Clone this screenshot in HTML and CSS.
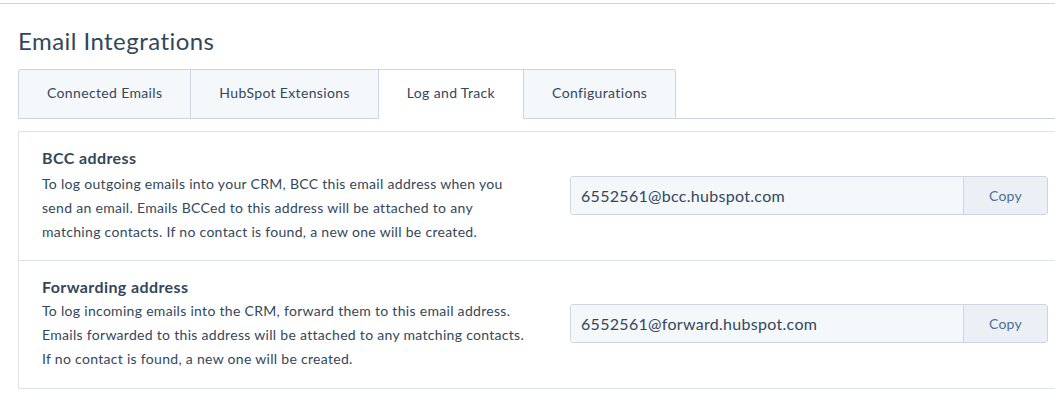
FILE: index.html
```html
<!DOCTYPE html>
<html lang="en">
<head>
  <meta charset="UTF-8">
  <meta name="viewport" content="width=device-width, initial-scale=1.0">
  <title>Email Integrations</title>
  <link rel="stylesheet" href="styles.css">
</head>
<body>
  <div class="topbar"></div>
  <div class="page">
    <h1>Email Integrations</h1>
    <div class="tabs">
      <div class="tab first">Connected Emails</div>
      <div class="tab">HubSpot Extensions</div>
      <div class="tab active">Log and Track</div>
      <div class="tab last">Configurations</div>
    </div>
    <div class="panel">
      <div class="row">
        <div class="info">
          <h2>BCC address</h2>
          <p>To log outgoing emails into your CRM, BCC this email address when you send an email. Emails BCCed to this address will be attached to any matching contacts. If no contact is found, a new one will be created.</p>
        </div>
        <div class="field">
          <input type="text" value="6552561@bcc.hubspot.com" readonly>
          <button>Copy</button>
        </div>
      </div>
      <div class="row">
        <div class="info">
          <h2>Forwarding address</h2>
          <p>To log incoming emails into the CRM, forward them to this email address. Emails forwarded to this address will be attached to any matching contacts. If no contact is found, a new one will be created.</p>
        </div>
        <div class="field">
          <input type="text" value="6552561@forward.hubspot.com" readonly>
          <button>Copy</button>
        </div>
      </div>
    </div>
  </div>
</body>
</html>
```

FILE: styles.css
```css
* {
  margin: 0;
  padding: 0;
  box-sizing: border-box;
}
body {
  font-family: Lato, 'Open Sans', sans-serif;
  color: #33475b;
  background: #fff;
  letter-spacing: 0.35px;
  overflow: hidden;
}
.topbar {
  height: 4px;
  border-bottom: 1px solid #cbd6e2;
}
.page {
  padding-left: 18px;
  width: 1072px;
}
h1 {
  margin-top: 21px;
  margin-bottom: 12px;
  font-size: 24px;
  line-height: 32px;
  font-weight: 400;
  letter-spacing: 0.45px;
  color: #33475b;
}
.tabs {
  display: flex;
  border-bottom: 1px solid #cbd6e2;
  height: 50px;
}
.tab {
  height: 49px;
  line-height: 46px;
  padding: 0 28px;
  font-size: 14px;
  background: #f5f8fa;
  border: 1px solid #cbd6e2;
  border-bottom: none;
  border-left: none;
}
.tab.first {
  border-left: 1px solid #cbd6e2;
  border-top-left-radius: 3px;
}
.tab.last {
  border-top-right-radius: 3px;
}
.tab.active {
  background: #fff;
  height: 50px;
}
.panel {
  margin-top: 12px;
  border: 1px solid #dfe3eb;
  width: 1054px;
}
.row {
  display: flex;
  align-items: center;
  padding: 14px 23px 16px;
}
.row + .row {
  border-top: 1px solid #dfe3eb;
  padding-bottom: 17px;
}
.row + .row h2 {
  margin-bottom: 0;
}
.info {
  flex: 1;
  padding-right: 40px;
}
.info h2 {
  font-size: 16px;
  font-weight: 700;
  line-height: 24px;
  letter-spacing: 0.4px;
  margin-bottom: 2px;
}
.info p {
  font-size: 14px;
  line-height: 24px;
  letter-spacing: 0.3px;
}
.field {
  flex: 0 0 478px;
  display: flex;
  height: 39px;
  border: 1px solid #cbd6e2;
  border-radius: 3px;
  overflow: hidden;
}
.field input {
  flex: 1;
  min-width: 0;
  border: none;
  background: #f5f8fa;
  padding-left: 10px;
  font-family: Lato, 'Open Sans', sans-serif;
  font-size: 16px;
  letter-spacing: 0.3px;
  color: #33475b;
  outline: none;
}
.field button {
  width: 84px;
  border: none;
  border-left: 1px solid #cbd6e2;
  background: #eaf0f6;
  font-family: Lato, 'Open Sans', sans-serif;
  font-size: 14px;
  letter-spacing: 0.3px;
  color: #506e91;
  cursor: pointer;
}
```
